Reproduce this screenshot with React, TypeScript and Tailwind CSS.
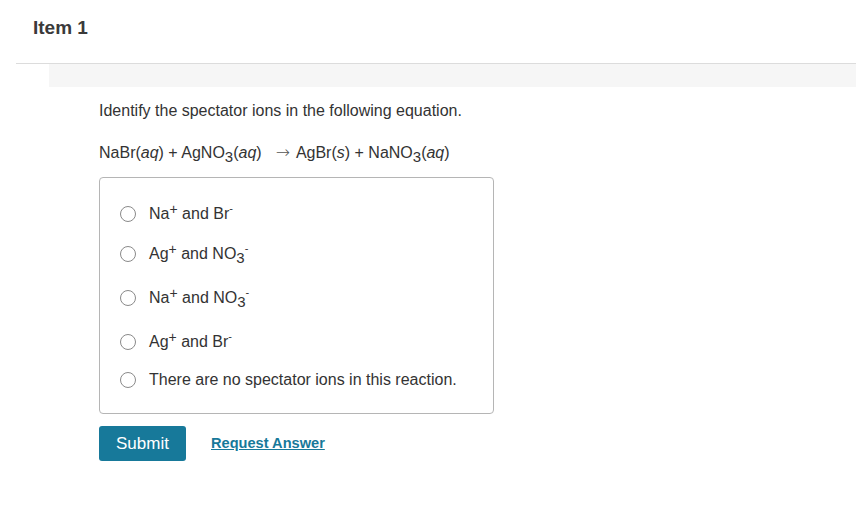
const options = [
  { id: 1, a: "Na", b: "Br", sub: "", gap: "mb-[20px]" },
  { id: 2, a: "Ag", b: "NO", sub: "3", gap: "mb-[24px]" },
  { id: 3, a: "Na", b: "NO", sub: "3", gap: "mb-[24px]" },
  { id: 4, a: "Ag", b: "Br", sub: "", gap: "mb-[18px]" },
];

function Radio() {
  return <span className="w-[16px] h-[16px] rounded-full border border-[#8a8a8a] bg-white shrink-0" />;
}

export default function App() {
  return (
    <div className="w-[856px] h-[520px] bg-white text-[#333] font-['Liberation_Sans',Arial,sans-serif]">
      <div className="pl-[33px] pt-[16px] h-[63px]">
        <h1 className="text-[19px] font-bold leading-[24px] text-[#3a3a3a]">Item 1</h1>
      </div>
      <div className="ml-[16px] border-t border-[#dcdcdc]" />
      <div className="ml-[49px] h-[23px] bg-[#f6f6f6]" />

      <div className="pl-[99px] pt-[14px]">
        <p className="text-[16px] leading-[20px]">Identify the spectator ions in the following equation.</p>
        <p className="text-[16px] leading-[20px] mt-[21px] h-[20px]">
          NaBr(<i>aq</i>) + AgNO<sub className="text-[15px] relative top-[4px]">3</sub>(<i>aq</i>)
          <span className="ml-[14px] mr-[6px] font-['DejaVu_Sans',sans-serif] font-extralight text-[17px] text-[#555]">→</span>
          AgBr(<i>s</i>) + NaNO<sub className="text-[15px] relative top-[4px]">3</sub>(<i>aq</i>)
        </p>

        <div className="mt-[15px] w-[395px] h-[237px] border border-[#b5b5b5] rounded-[4px] pt-[26px] pl-[20px]">
          <div className="flex flex-col">
            {options.map((o) => (
              <div key={o.id} className={`flex items-center gap-[13px] h-[20px] ${o.gap}`}>
                <Radio />
                <span className="text-[16px] leading-[20px] whitespace-nowrap">
                  {o.a}
                  <sup className="text-[14px] relative -top-[5px]">+</sup> and {o.b}
                  {o.sub && <sub className="text-[15px] relative top-[4px]">{o.sub}</sub>}
                  <sup className="text-[11px] relative -top-[7px]">-</sup>
                </span>
              </div>
            ))}
            <div className="flex items-center gap-[13px] h-[20px]">
              <Radio />
              <span className="text-[16px] leading-[20px]">There are no spectator ions in this reaction.</span>
            </div>
          </div>
        </div>

        <div className="flex items-center mt-[12px]">
          <button className="w-[87px] h-[35px] rounded-[3px] bg-[#17799a] text-white text-[17px]">Submit</button>
          <a className="ml-[25px] text-[14.6px] font-bold text-[#17799a] underline">Request Answer</a>
        </div>
      </div>
    </div>
  );
}
